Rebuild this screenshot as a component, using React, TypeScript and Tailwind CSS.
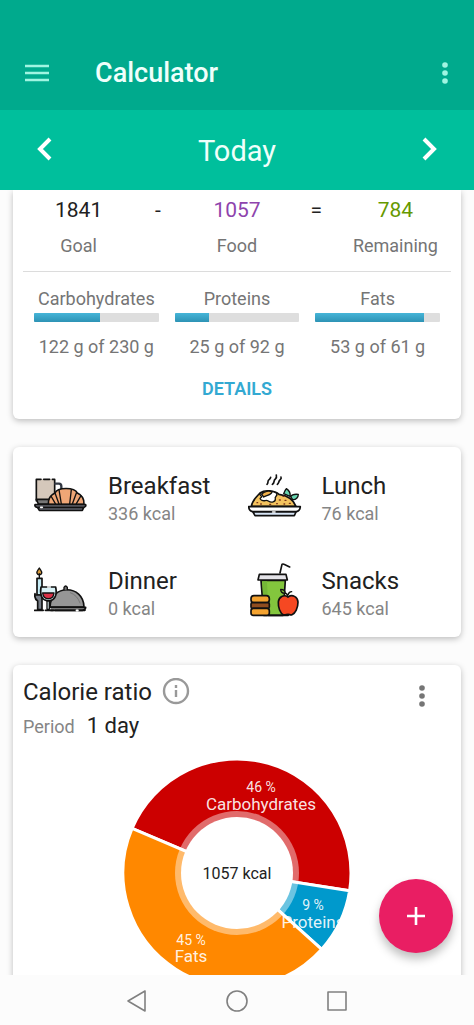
import React from 'react';

interface Nutrient {
    name: string;
    eaten: number;
    target: number;
}

interface Meal {
    name: string;
    kcal: number;
    icon: React.ReactNode;
}

const BreakfastIcon = () => (
    <svg viewBox="42 24 162 162" className="w-[54px] h-[54px]" fill="none" stroke="#111" strokeWidth="5" strokeLinecap="round" strokeLinejoin="round" aria-hidden="true">
        <path d="M49 58h55v64l-8 10H57l-8-10z" fill="#d5c8bb" stroke="none" />
        <path d="M49 118h40v14H55z" fill="#777" />
        <path d="M49 122V58h14M71 58h18M97 58h7v40" />
        <path d="M106 71h11q7 0 7 8v12" stroke="#333843" strokeWidth="7" />
        <path d="M85 133c-1-17 7-28 20-34 8-18 58-18 67 0 13 6 21 17 20 34z" fill="#efa676" />
        <path d="M105 99l12 33M117 89l7 43M154 89l-5 43M170 97l-13 35M93 108l13 23M183 107l-14 24" strokeWidth="4" />
        <path d="M45 134h152q2 6-6 8H52q-9-2-7-8z" fill="#9295a3" />
        <path d="M53 143h138l-4 8H58z" fill="#858896" />
        <path d="M62 142h5" stroke="#fff" />
    </svg>
);

const LunchIcon = () => (
    <svg viewBox="39 24 162 162" className="w-[54px] h-[54px]" fill="none" stroke="#111" strokeWidth="5" strokeLinecap="round" strokeLinejoin="round" aria-hidden="true">
        <path d="M96 73c5-4 1-9 5-13 3-3 6-4 6-8M112 73c9-6 2-11 9-16 5-4 4-8 3-12M127 73c6-5 3-9 8-13 4-4 4-7 3-9" />
        <path d="M49 139c3-18 15-28 26-40 13-10 44-9 57 4 30 4 44 18 51 36z" fill="#f4c35f" />
        <path d="M74 103c14-15 42-9 50-4 7 9-7 10-3 18 1 9-12 12-21 6-8-5-10 2-19-2-12-5-1-8-1-11z" fill="#fff" strokeWidth="4" />
        <path d="M80 103c7-10 23-12 31-7-3 10-18 10-25 15z" fill="#efb04b" strokeWidth="4" />
        <path d="M146 101c2-6 4-11 8-15 9 6 13 14 11 23zM167 110c5-9 14-8 23-7 0 9-7 17-17 16z" fill="#68d5b0" strokeWidth="4" />
        <path d="M66 128h2M77 132h2M104 133h3M133 120h3M150 121h3M144 109h3M163 130h3M125 131h2M147 132h2" stroke="#793519" strokeWidth="4" />
        <path d="M41 140h155q-1 13-12 15H53q-11-2-12-15z" fill="#fff" />
        <path d="M54 156h129l-5 11H60z" fill="#d8e6f7" />
        <path d="M113 156h7" stroke="#fff" />
    </svg>
);

const DinnerIcon = () => (
    <svg viewBox="42 24 162 162" className="w-[54px] h-[54px]" fill="none" stroke="#111" strokeWidth="5" strokeLinecap="round" strokeLinejoin="round" aria-hidden="true">
        <path d="M58 39c-5 8-9 10-7 16 2 6 12 6 14 0 2-6-3-9-7-16z" fill="#d99b3c" strokeWidth="4" />
        <path d="M58 56v12" strokeWidth="4" />
        <path d="M51 70h15v50H51z" fill="#c6edf7" />
        <path d="M45 116q-3 15 8 22v26h13v-44H45z" fill="#777e88" />
        <path d="M90 156c1-69 101-69 102 0z" fill="#969696" />
        <path d="M132 104v-7q5-8 10 0v7" fill="#777" strokeWidth="4" />
        <path d="M151 113c14 5 24 16 29 31" stroke="#777" strokeWidth="3" />
        <path d="M92 157h105q0 8-10 9H92" fill="#999" />
        <path d="M63 96h44c5 25-3 39-17 41h-10c-14-3-21-16-17-41z" fill="#d9f2f7" />
        <path d="M68 114h34c-1 11-7 17-17 17s-16-7-17-17z" fill="#d93248" strokeWidth="4" />
        <path d="M81 138h7v25h-7z" fill="#e7f7fa" strokeWidth="4" />
        <path d="M44 166h26M76 166h24M105 166h62M176 166h19" />
        <path d="M83 96h8M169 166h5" stroke="#fff" />
    </svg>
);

const SnacksIcon = () => (
    <svg viewBox="39 24 162 162" className="w-[54px] h-[54px]" fill="none" stroke="#111" strokeWidth="5" strokeLinecap="round" strokeLinejoin="round" aria-hidden="true">
        <path d="M135 54l6-26q2-2 6 0l17 8" />
        <path d="M78 76h73l-7 105H86z" fill="#83c63d" />
        <path d="M82 79h14l4 99H88z" fill="#75b737" stroke="none" />
        <path d="M73 58h80l4 17H69z" fill="#e4e3e8" />
        <rect x="48" y="122" width="55" height="21" rx="9" fill="#f4a330" />
        <rect x="48" y="143" width="55" height="17" rx="4" fill="#8f4d20" />
        <rect x="48" y="160" width="55" height="21" rx="7" fill="#f4a330" />
        <path d="M159 126c13-9 29-1 30 15 0 18-8 34-18 38-5 2-7-1-12-1s-9 3-14 1c-9-4-16-21-15-38 1-15 17-24 29-15z" fill="#f54822" />
        <path d="M159 125c-1-7-5-10-9-12M149 115c-10 0-12-5-12-12 10 0 14 5 13 12M160 118q2-8 10-8" fill="#75b737" strokeWidth="4" />
        <path d="M100 181h60" />
    </svg>
);

const nutrients: Nutrient[] = [
    { name: 'Carbohydrates', eaten: 122, target: 230 },
    { name: 'Proteins', eaten: 25, target: 92 },
    { name: 'Fats', eaten: 53, target: 61 },
];

const meals: Meal[] = [
    { name: 'Breakfast', kcal: 336, icon: <BreakfastIcon /> },
    { name: 'Lunch', kcal: 76, icon: <LunchIcon /> },
    { name: 'Dinner', kcal: 0, icon: <DinnerIcon /> },
    { name: 'Snacks', kcal: 645, icon: <SnacksIcon /> },
];

// Slice edges in degrees, clockwise from three o'clock
const slices = [
    { color: '#cc0000', from: 203, to: 369 },
    { color: '#0099cc', from: 9, to: 42 },
    { color: '#ff8800', from: 42, to: 203 },
];

const point = (deg: number, r: number) => {
    const a = (deg * Math.PI) / 180;
    return `${113 + r * Math.cos(a)} ${113 + r * Math.sin(a)}`;
};

const slicePath = (from: number, to: number) =>
    `M113 113L${point(from, 114)}A114 114 0 0 1 ${point(to, 114)}Z`;

const Dots = () => (
    <svg viewBox="0 0 8 24" className="w-2 h-6" fill="currentColor" aria-hidden="true">
        <circle cx="4" cy="4" r="2.8" />
        <circle cx="4" cy="12" r="2.8" />
        <circle cx="4" cy="20" r="2.8" />
    </svg>
);

const RatioChart = () => (
    <svg viewBox="0 0 226 226" className="w-[226px] h-[226px] shrink-0 overflow-visible" role="img" aria-label="Calorie ratio chart">
        {slices.map((s) => (
            <path key={s.color} d={slicePath(s.from, s.to)} fill={s.color} stroke="#fff" strokeWidth="3" />
        ))}
        <circle cx="113" cy="113" r="62" fill="#fff" fillOpacity="0.42" />
        <circle cx="113" cy="113" r="56" fill="#fff" />
        <g fill="#fff" fillOpacity="0.9" textAnchor="middle">
            <text x="137" y="32" fontSize="14">46 %</text>
            <text x="137" y="50" fontSize="17">Carbohydrates</text>
            <text x="189" y="150" fontSize="14">9 %</text>
            <text x="189" y="168" fontSize="17">Proteins</text>
            <text x="67" y="185" fontSize="14">45 %</text>
            <text x="67" y="202" fontSize="17">Fats</text>
        </g>
        <text x="113" y="119" fontSize="16" fill="#222" textAnchor="middle">1057 kcal</text>
    </svg>
);

const App: React.FC = () => {
    return (
        <div className="relative flex flex-col h-screen bg-[#fcfcfc] overflow-hidden font-[Roboto,sans-serif] text-[#212121]">
            {/* App bar */}
            <header className="shrink-0 bg-[#00aa8d] pt-9">
                <div className="h-[74px] flex items-center pl-6 pr-[25px] text-[#a0f5e2]">
                    <button aria-label="Menu" className="mr-[45px]">
                        <svg viewBox="0 0 26 18" className="w-[26px] h-[18px]" stroke="currentColor" strokeWidth="2.4" aria-hidden="true">
                            <path d="M1 2h24M1 9h24M1 16h24" />
                        </svg>
                    </button>
                    <h1 className="flex-1 text-[27px] leading-8 font-medium text-[#effffb]">Calculator</h1>
                    <button aria-label="More options"><Dots /></button>
                </div>
            </header>

            {/* Day switcher */}
            <div className="shrink-0 h-20 bg-[#00bf9c] flex items-center justify-between px-9 text-white">
                <button aria-label="Previous day">
                    <svg viewBox="0 0 18 26" className="w-[18px] h-[26px]" fill="none" stroke="currentColor" strokeWidth="4" aria-hidden="true">
                        <path d="M14 2L4 12l10 10" />
                    </svg>
                </button>
                <h2 className="pt-[2px] text-[29px] leading-9 text-[#effffb]">Today</h2>
                <button aria-label="Next day">
                    <svg viewBox="0 0 18 26" className="w-[18px] h-[26px]" fill="none" stroke="currentColor" strokeWidth="4" aria-hidden="true">
                        <path d="M4 2l10 10L4 22" />
                    </svg>
                </button>
            </div>

            <main className="flex-1 min-h-0 overflow-hidden px-[13px] flex flex-col gap-7">
                {/* Summary */}
                <section className="shrink-0 bg-white rounded-b-md shadow-[0_2px_6px_rgba(0,0,0,0.25)] pt-2 pb-[18px]">
                    <div className="grid grid-cols-5 px-[26px] gap-y-3 justify-items-center text-[21px] leading-6">
                        <span>1841</span>
                        <span>-</span>
                        <span className="text-[#8e44ad]">1057</span>
                        <span>=</span>
                        <span className="text-[#669900]">784</span>
                        <span className="text-lg leading-6 text-[#757575]">Goal</span>
                        <span className="col-start-3 text-lg leading-6 text-[#757575]">Food</span>
                        <span className="col-start-5 flex w-full justify-center text-lg leading-6 text-[#757575]">Remaining</span>
                    </div>
                    <hr className="mt-[13px] mx-[10px] border-[#dcdcdc]" />
                    <div className="grid grid-cols-3 gap-4 px-[21px] mt-[15px] text-center text-lg leading-6 text-[#757575]">
                        {nutrients.map((n) => (
                            <div key={n.name}>
                                <p>{n.name}</p>
                                <div
                                    role="progressbar"
                                    aria-label={n.name}
                                    aria-valuenow={n.eaten}
                                    aria-valuemax={n.target}
                                    className="mt-[2px] h-[9px] bg-[#dedede] rounded-[1px] overflow-hidden"
                                >
                                    <div
                                        className="h-full bg-linear-to-b from-[#46b5d8] to-[#2d93b5]"
                                        style={{ width: `${(n.eaten / n.target) * 100}%` }}
                                    />
                                </div>
                                <p className="mt-[13px]">{n.eaten} g of {n.target} g</p>
                            </div>
                        ))}
                    </div>
                    <button className="block mx-auto mt-[18px] text-lg leading-6 font-semibold text-[#33a9d2]">DETAILS</button>
                </section>

                {/* Meals */}
                <section className="shrink-0 bg-white rounded-md shadow-[0_2px_6px_rgba(0,0,0,0.25)] grid grid-cols-2 gap-y-[35px] pt-[21px] pb-[14px] pl-[21px]">
                    {meals.map((meal) => (
                        <div key={meal.name} className="flex gap-5">
                            {meal.icon}
                            <div className="pt-1 leading-7">
                                <h3 className="text-2xl leading-7">{meal.name}</h3>
                                <p className="text-lg leading-7 text-[#858585]">{meal.kcal} kcal</p>
                            </div>
                        </div>
                    ))}
                </section>

                {/* Calorie ratio */}
                <section className="shrink-0 bg-white rounded-md shadow-[0_2px_6px_rgba(0,0,0,0.25)] px-[10px] pt-[13px] pb-6">
                    <div className="flex items-start justify-between">
                        <div>
                            <div className="flex items-center gap-[10px]">
                                <h3 className="text-2xl leading-7">Calorie ratio</h3>
                                <button aria-label="About calorie ratio" className="text-[#999]">
                                    <svg viewBox="0 0 28 28" className="w-7 h-7" fill="none" stroke="currentColor" strokeWidth="2.4" aria-hidden="true">
                                        <circle cx="14" cy="13" r="12" />
                                        <path d="M14 12v7M14 7v3" />
                                    </svg>
                                </button>
                            </div>
                            <p className="mt-[6px] flex items-baseline gap-3 text-[22px] leading-7">
                                <span className="text-lg leading-7 text-[#858585]">Period</span>
                                1 day
                            </p>
                        </div>
                        <button aria-label="Chart options" className="mt-[6px] mr-[25px] text-[#757575]"><Dots /></button>
                    </div>
                    <div className="mt-[19px] flex justify-center">
                        <RatioChart />
                    </div>
                </section>
            </main>

            {/* System navigation */}
            <nav className="shrink-0 h-[50px] bg-[#fcfcfc] flex items-center justify-center gap-[76px] text-[#808080]">
                <button aria-label="Back">
                    <svg viewBox="0 0 24 24" className="w-6 h-6" fill="none" stroke="currentColor" strokeWidth="1.6" strokeLinejoin="round" aria-hidden="true">
                        <path d="M20 3v20L3 13z" />
                    </svg>
                </button>
                <button aria-label="Home">
                    <svg viewBox="0 0 24 24" className="w-6 h-6" fill="none" stroke="currentColor" strokeWidth="1.6" aria-hidden="true">
                        <circle cx="12" cy="13" r="10" />
                    </svg>
                </button>
                <button aria-label="Recent apps">
                    <svg viewBox="0 0 24 24" className="w-6 h-6" fill="none" stroke="currentColor" strokeWidth="1.6" strokeLinejoin="round" aria-hidden="true">
                        <path d="M3 4h18v18H3z" />
                    </svg>
                </button>
            </nav>

            <button
                aria-label="Add food"
                className="absolute right-[21px] bottom-[72px] w-[74px] h-[74px] rounded-full bg-[#e91e63] text-white flex items-center justify-center shadow-[0_6px_10px_rgba(0,0,0,0.25)]"
            >
                <svg viewBox="0 0 20 20" className="w-5 h-5" stroke="currentColor" strokeWidth="2.6" aria-hidden="true">
                    <path d="M10 1v18M1 10h18" />
                </svg>
            </button>
        </div>
    );
};

export default App;
